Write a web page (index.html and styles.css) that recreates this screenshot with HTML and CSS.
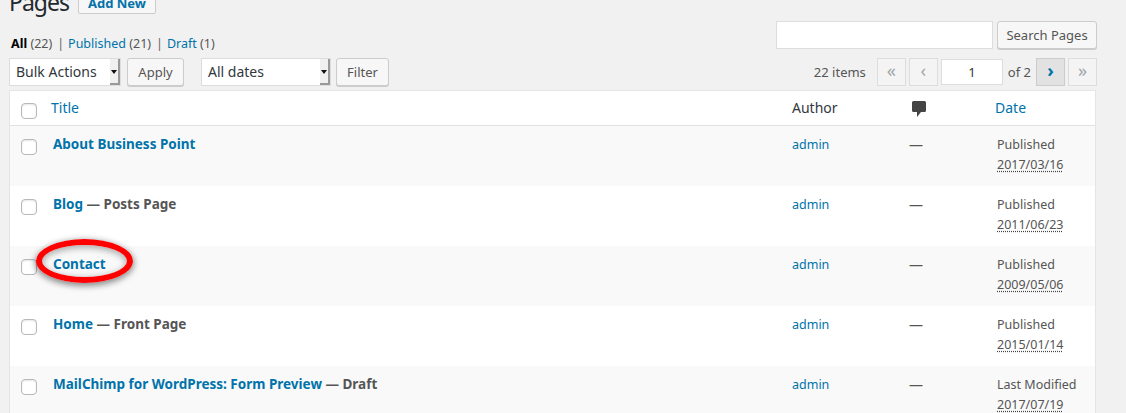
FILE: index.html
```html
<!DOCTYPE html>
<html lang="en">
<head>
<meta charset="utf-8">
<title>Pages</title>
<link rel="stylesheet" href="styles.css">
</head>
<body>
<div class="wrap">
  <div class="head"><h1>Pages</h1><a class="add" href="#">Add New</a></div>
  <div class="top">
    <ul class="subs">
      <li><b>All</b> <span>(22)</span><i>|</i></li>
      <li><a href="#">Published</a> <span>(21)</span><i>|</i></li>
      <li><a href="#">Draft</a> <span>(1)</span></li>
    </ul>
    <div class="search"><input class="sinput" type="text" aria-label="Search"><button class="btn sbtn">Search Pages</button></div>
  </div>
  <div class="nav">
    <div class="sel w1">Bulk Actions<span class="arrow"></span></div>
    <button class="btn apply">Apply</button>
    <div class="sel w2">All dates<span class="arrow"></span></div>
    <button class="btn filter">Filter</button>
    <div class="pager">
      <span class="count">22 items</span>
      <span class="pg off">«</span>
      <span class="pg off">‹</span>
      <span class="cur">1</span>
      <span class="of">of 2</span>
      <span class="pg on">›</span>
      <span class="pg off">»</span>
    </div>
  </div>
  <table>
    <colgroup><col class="c1"><col class="c2"><col class="c3"><col class="c4"><col class="c5"></colgroup>
    <thead>
      <tr>
        <th class="cb"><span class="box"></span></th>
        <th class="hl"><a href="#">Title</a></th>
        <th>Author</th>
        <th class="ci"><svg width="14" height="16" viewBox="0 0 14 16"><path d="M1.500 0h11A1.500 1.500 0 0 1 14 1.500v8A1.500 1.500 0 0 1 12.500 11H9l-4 5v-5H1.500A1.500 1.500 0 0 1 0 9.500v-8A1.500 1.500 0 0 1 1.500 0z" fill="#444"/></svg></th>
        <th class="hl"><a href="#">Date</a></th>
      </tr>
    </thead>
    <tbody>
      <tr class="alt">
        <td class="cb"><span class="box"></span></td>
        <td class="name"><a class="t" href="#">About Business Point</a></td>
        <td><a href="#">admin</a></td><td class="dash">—</td>
        <td>Published<br><abbr>2017/03/16</abbr></td>
      </tr>
      <tr>
        <td class="cb"><span class="box"></span></td>
        <td class="name"><a class="t" href="#">Blog</a><b> — Posts Page</b></td>
        <td><a href="#">admin</a></td><td class="dash">—</td>
        <td>Published<br><abbr>2011/06/23</abbr></td>
      </tr>
      <tr class="alt">
        <td class="cb"><span class="box"></span></td>
        <td class="name mark"><a class="t" href="#">Contact</a><span class="ring"></span></td>
        <td><a href="#">admin</a></td><td class="dash">—</td>
        <td>Published<br><abbr>2009/05/06</abbr></td>
      </tr>
      <tr>
        <td class="cb"><span class="box"></span></td>
        <td class="name"><a class="t" href="#">Home</a><b> — Front Page</b></td>
        <td><a href="#">admin</a></td><td class="dash">—</td>
        <td>Published<br><abbr>2015/01/14</abbr></td>
      </tr>
      <tr class="alt">
        <td class="cb"><span class="box"></span></td>
        <td class="name"><a class="t" href="#">MailChimp for WordPress: Form Preview</a><b> — Draft</b></td>
        <td><a href="#">admin</a></td><td class="dash">—</td>
        <td>Last Modified<br><abbr>2017/07/19</abbr></td>
      </tr>
    </tbody>
  </table>
</div>
</body>
</html>
```
FILE: styles.css
```css
html, body { margin: 0; padding: 0; height: 413px; overflow: hidden; }
body { background: #f1f1f1; color: #555; font: 13px/20px "Noto Sans", "Open Sans", sans-serif; }
a { color: #0073aa; text-decoration: none; }
.wrap { width: 1087px; margin-left: 9px; }
.head { display: flex; align-items: flex-start; height: 22px; margin-top: -12px; }
h1 { margin: 0; font-size: 23px; line-height: 29px; font-weight: 400; color: #23282d; letter-spacing: -1px; }
.add { margin: 4px 0 0 9px; height: 22px; line-height: 20px; padding: 0 9px; font-weight: 700; font-size: 13px; background: #f7f7f7; border: 1px solid #ccc; border-radius: 2px; box-sizing: border-box; }
.top { display: flex; justify-content: space-between; height: 49px; }
.subs { list-style: none; margin: 24px 0 0 2px; padding: 0; display: flex; font-size: 12.500px; }
.subs b { color: #000; }
.subs i { font-style: normal; color: #666; margin: 0 4px 0 5px; }
.search { display: flex; gap: 4px; margin-top: 11px; margin-right: -1px; height: 28px; }
.sinput { width: 217px; height: 28px; box-sizing: border-box; border: 1px solid #ddd; background: #fff; padding: 0; margin: 0; }
.btn { font: inherit; height: 28px; box-sizing: border-box; padding: 0 10px; color: #555; background: #f7f7f7; border: 1px solid #ccc; border-radius: 3px; box-shadow: 0 1px 0 #ccc; margin: 0; }
.sbtn { width: 100px; padding: 0; }
.nav { display: flex; align-items: flex-start; height: 32px; margin-top: -1px; }
.sel { position: relative; height: 28px; line-height: 26px; box-sizing: border-box; border: 1px solid #ddd; background: #fff; padding-left: 6px; font-size: 14px; color: #32373c; }
.w1 { width: 112px; }
.w2 { width: 130px; margin-left: 17px; }
.arrow { position: absolute; top: 0; right: 0; width: 8px; height: 24px; background: #f0f0f0; border-right: 2px solid #999; border-bottom: 2px solid #999; }
.arrow::after { content: ""; position: absolute; left: 1px; top: 11px; border: 3px solid transparent; border-top: 4px solid #111; }
.apply { margin-left: 6px; width: 57px; padding: 0; }
.filter { margin-left: 5px; width: 53px; padding: 0; }
.pager { margin-left: auto; margin-right: -1px; display: flex; align-items: center; height: 28px; }
.count { margin-right: 11px; }
.pg { width: 29px; height: 28px; box-sizing: border-box; border: 1px solid #ddd; text-align: center; font-size: 18px; line-height: 22px; background: #f4f4f4; color: #a0a5aa; }
.pg.off + .pg.off { margin-left: 3px; }
.pg.on { background: #e2e2e2; border-color: #ccc; color: #0073aa; font-weight: 700; }
.pg.on + .pg { margin-left: 3px; }
.cur { width: 62px; height: 26px; line-height: 24px; box-sizing: border-box; border: 1px solid #ddd; background: #fff; text-align: center; margin-left: 3px; color: #32373c; }
.of { margin: 0 5px 0 5px; }
table { width: 1087px; border-collapse: separate; border-spacing: 0; table-layout: fixed; background: #fff; border: 1px solid #e5e5e5; }
.c1 { width: 33px; } .c2 { width: 739px; } .c3 { width: 117px; } .c4 { width: 88px; } .c5 { width: 108px; }
th { height: 35px; padding: 0 10px; box-sizing: border-box; text-align: left; font-weight: 400; font-size: 14px; color: #32373c; border-bottom: 1px solid #e1e1e1; vertical-align: middle; }
th.hl { padding-left: 8px; }
th.ci { padding: 7px 0 0 13px; }
td { height: 60px; padding: 9px 10px 0; box-sizing: border-box; vertical-align: top; font-size: 12.500px; }
td a { font-size: 12.500px; }
td.name { padding-top: 8px; }
td.dash { font-size: 14px; line-height: 19px; }
.alt { background: #f9f9f9; }
td.cb { padding: 13px 0 0 11px; }
th.cb { padding: 5px 0 0 11px; }
.box { display: block; width: 16px; height: 16px; box-sizing: border-box; border: 1px solid #b4b9be; border-radius: 4px; background: #fff; box-shadow: inset 0 1px 2px rgba(0,0,0,.1); }
td a.t { font-weight: 700; font-size: 13.500px; }
td b { font-size: 13.500px; font-weight: 700; }
abbr { text-decoration: underline dotted #444; text-underline-offset: 2px; }
.mark { position: relative; }
.ring { position: absolute; left: -7px; top: -7px; width: 97px; height: 44px; box-sizing: border-box; border: 6px solid #f00; border-radius: 50%; box-shadow: 0 2px 6px 1px rgba(0,0,0,.45), inset 0 2px 6px 1px rgba(0,0,0,.3); }
```
